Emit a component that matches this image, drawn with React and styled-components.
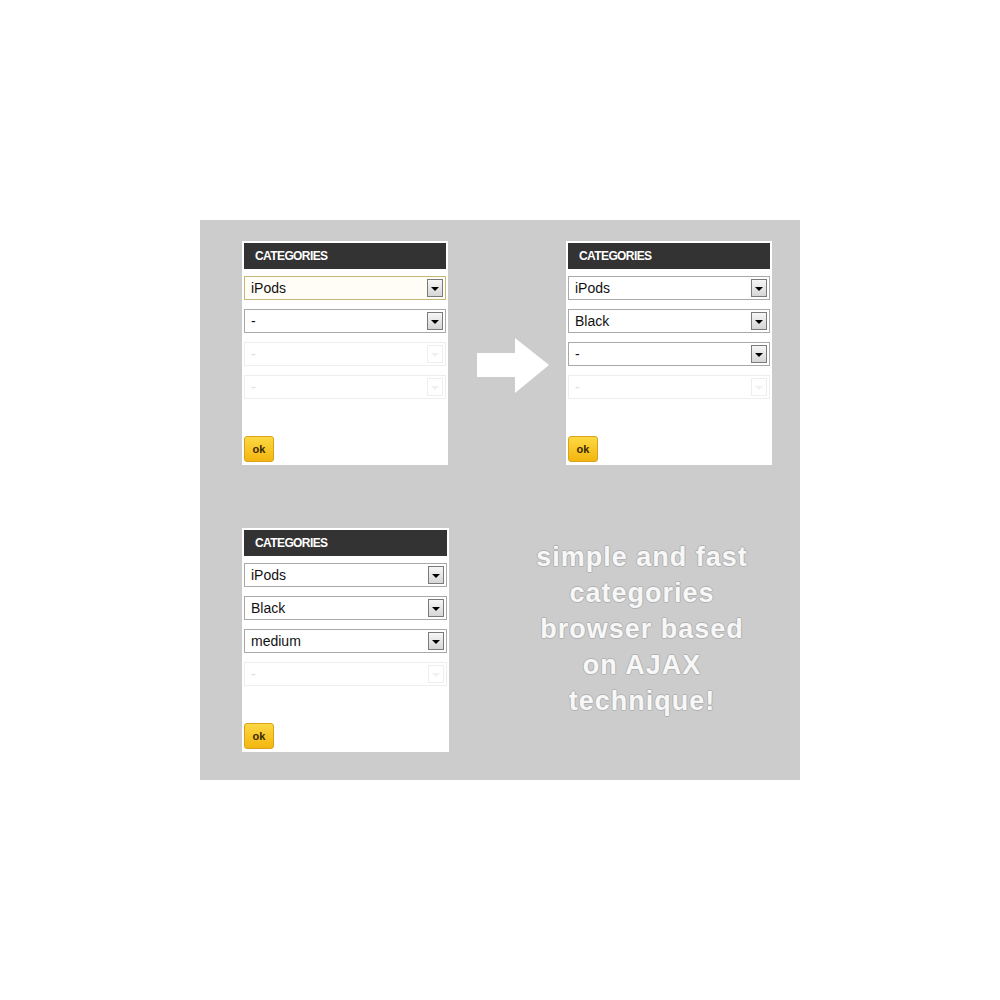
import React from "react";
import styled, { createGlobalStyle, css } from "styled-components";

const GlobalStyle = createGlobalStyle`
  html, body {
    margin: 0;
    padding: 0;
    background: #ffffff;
  }
  body {
    font-family: "Liberation Sans", Arial, sans-serif;
  }
`;

const Page = styled.div`
  width: 1000px;
  height: 1000px;
  padding-top: 220px;
  padding-left: 200px;
  box-sizing: border-box;
`;

const Panel = styled.div`
  width: 600px;
  height: 560px;
  background: #cccccc;
  box-sizing: border-box;
  padding: 21px 0 0 42px;
  display: flex;
  flex-direction: column;
`;

const Row = styled.div`
  display: flex;
  align-items: flex-start;
  margin-top: ${(p) => p.$offset || 0}px;
`;

const Block = styled.div`
  width: ${(p) => p.$w || 206}px;
  background: #ffffff;
  padding: 2px 2px 3px;
  box-sizing: border-box;
  display: flex;
  flex-direction: column;
`;

const Header = styled.div`
  height: 26px;
  background: #333333;
  color: #ffffff;
  font-weight: bold;
  font-size: 12px;
  letter-spacing: -0.6px;
  line-height: 26px;
  padding-left: 11px;
`;

const Selects = styled.div`
  display: flex;
  flex-direction: column;
  gap: 9px;
  margin-top: 7px;
`;

const Select = styled.div`
  height: 24px;
  box-sizing: border-box;
  border: 1px solid #a9a9a9;
  background: #ffffff;
  display: flex;
  align-items: center;
  justify-content: space-between;
  padding: 0 2px 0 6px;
  font-size: 14px;
  color: #111111;
  ${(p) =>
    p.$focused &&
    css`
      border-color: #c8b878;
      background: #fffdf6;
    `}
  ${(p) =>
    p.$disabled &&
    css`
      border-color: #eeeeee;
      color: #dddddd;
    `}
`;

const Caret = styled.span`
  width: 16px;
  height: 18px;
  box-sizing: border-box;
  border: 1px solid #7a7a7a;
  background: linear-gradient(#f6f6f6, #d6d6d6);
  display: flex;
  align-items: center;
  justify-content: center;
  &::after {
    content: "";
    border-left: 4px solid transparent;
    border-right: 4px solid transparent;
    border-top: 4px solid #000000;
    margin-top: 1px;
  }
  ${(p) =>
    p.$disabled &&
    css`
      border-color: #eeeeee;
      background: #ffffff;
      &::after {
        border-top-color: #f0f0f0;
      }
    `}
`;

const OkButton = styled.div`
  margin-top: 37px;
  width: 30px;
  height: 26px;
  box-sizing: border-box;
  border: 1px solid #d9a21b;
  border-radius: 3px;
  background: linear-gradient(#fcd843, #f3b610);
  color: #3a2800;
  font-weight: bold;
  font-size: 11px;
  display: flex;
  align-items: center;
  justify-content: center;
`;

const ArrowWrap = styled.div`
  margin: 97px 17px 0 29px;
  width: 72px;
  height: 55px;
`;

const Tagline = styled.div`
  width: 260px;
  margin: 11px 0 0 63px;
  text-align: center;
  color: #f7f7f7;
  font-weight: bold;
  font-size: 27px;
  letter-spacing: 1px;
  line-height: 36px;
  text-shadow: 1px 0 0 #b2b2b2, -1px 0 0 #b2b2b2, 0 1px 0 #b2b2b2,
    0 -1px 0 #b2b2b2;
`;

function CategoryBlock({ values, w }) {
  return (
    <Block $w={w}>
      <Header>CATEGORIES</Header>
      <Selects>
        {values.map((v, i) => (
          <Select key={i} $focused={v.focused} $disabled={v.disabled}>
            <span>{v.label}</span>
            <Caret $disabled={v.disabled} />
          </Select>
        ))}
      </Selects>
      <OkButton>ok</OkButton>
    </Block>
  );
}

function RightArrow() {
  return (
    <ArrowWrap>
      <svg width="72" height="55" viewBox="0 0 72 55">
        <polygon points="0,15 38,15 38,0 72,27 38,55 38,39 0,39" fill="#ffffff" />
      </svg>
    </ArrowWrap>
  );
}

export default function App() {
  return (
    <>
      <GlobalStyle />
      <Page>
        <Panel>
          <Row>
            <CategoryBlock
              values={[
                { label: "iPods", focused: true },
                { label: "-" },
                { label: "-", disabled: true },
                { label: "-", disabled: true },
              ]}
            />
            <RightArrow />
            <CategoryBlock
              values={[
                { label: "iPods" },
                { label: "Black" },
                { label: "-" },
                { label: "-", disabled: true },
              ]}
            />
          </Row>
          <Row $offset={63}>
            <CategoryBlock
              w={207}
              values={[
                { label: "iPods" },
                { label: "Black" },
                { label: "medium" },
                { label: "-", disabled: true },
              ]}
            />
            <Tagline>
              simple and fast
              <br />
              categories
              <br />
              browser based
              <br />
              on AJAX
              <br />
              technique!
            </Tagline>
          </Row>
        </Panel>
      </Page>
    </>
  );
}
